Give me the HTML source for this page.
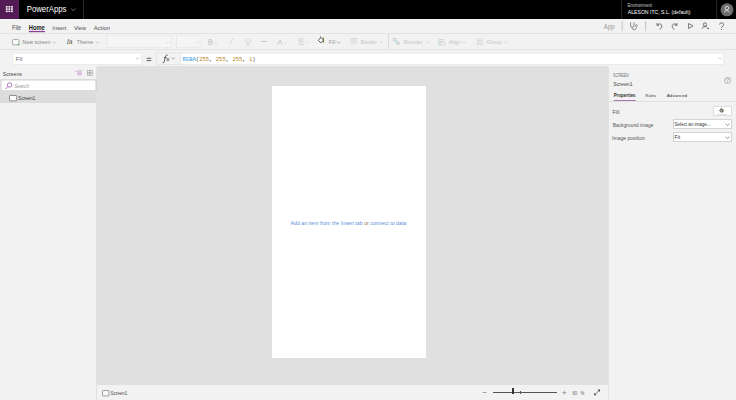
<!DOCTYPE html>
<html><head><meta charset="utf-8">
<style>
*{box-sizing:border-box;margin:0;padding:0}
html,body{width:736px;height:400px;overflow:hidden;background:#f2f2f2;font-family:"Liberation Sans",sans-serif;position:relative}
.r{position:absolute}
.s{position:absolute;overflow:visible}
.t{position:absolute;white-space:nowrap;line-height:1;transform-origin:0 0}
</style></head><body>
<div class="r" style="left:0px;top:0px;width:736px;height:19px;background:#000;"></div>
<div class="r" style="left:0px;top:0px;width:19px;height:19px;background:#521b55;"></div>
<svg class="s" style="left:0px;top:0px;" width="19" height="19" viewBox="0 0 19 19"><rect x="5.80" y="6.00" width="1.9" height="1.6" fill="#f4eef5"/><rect x="5.80" y="8.25" width="1.9" height="1.6" fill="#f4eef5"/><rect x="5.80" y="10.50" width="1.9" height="1.6" fill="#f4eef5"/><rect x="8.40" y="6.00" width="1.9" height="1.6" fill="#f4eef5"/><rect x="8.40" y="8.25" width="1.9" height="1.6" fill="#f4eef5"/><rect x="8.40" y="10.50" width="1.9" height="1.6" fill="#f4eef5"/><rect x="11.00" y="6.00" width="1.9" height="1.6" fill="#f4eef5"/><rect x="11.00" y="8.25" width="1.9" height="1.6" fill="#f4eef5"/><rect x="11.00" y="10.50" width="1.9" height="1.6" fill="#f4eef5"/></svg>
<svg class="s" style="left:70px;top:8px;" width="7" height="4" viewBox="0 0 7 4"><polyline points="1.2,0.7 3.3000000000000003,2.7 5.4,0.7" fill="none" stroke="#bbb" stroke-width="0.6"/></svg>
<div class="r" style="left:83px;top:0px;width:1px;height:19px;background:#2a2a2a;"></div>
<svg class="s" style="left:620px;top:0px;" width="3" height="19" viewBox="0 0 3 19"><rect x="1.3" y="0" width="0.8" height="19" fill="#333"/></svg>
<svg class="s" style="left:715px;top:0px;" width="3" height="19" viewBox="0 0 3 19"><rect x="1.3" y="0" width="0.8" height="19" fill="#333"/></svg>
<svg class="s" style="left:719.5px;top:2.5px;" width="14" height="14" viewBox="0 0 14 14"><circle cx="7" cy="6.8" r="6.5" fill="#6c6c6c"/><circle cx="6.9" cy="5.1" r="1.8" fill="none" stroke="#fff" stroke-width="0.75"/><path d="M4 9.4 Q6.9 5.8 9.8 9.4" fill="none" stroke="#fff" stroke-width="0.75"/></svg>
<div class="r" style="left:0px;top:19px;width:736px;height:14.5px;background:#f2f2f2;"></div>
<div class="r" style="left:0px;top:33.2px;width:736px;height:0.7px;background:#e2e2e2;"></div>
<svg class="s" style="left:28px;top:30px;" width="18" height="3" viewBox="0 0 18 3"><rect x="0.9" y="0.9" width="16" height="1.3" fill="#8b3f98"/></svg>
<svg class="s" style="left:620px;top:20px;" width="3" height="12" viewBox="0 0 3 12"><rect x="1.7" y="1.3" width="0.8" height="10" fill="#b4b4b4"/></svg>
<svg class="s" style="left:644px;top:20px;" width="3" height="12" viewBox="0 0 3 12"><rect x="1.3" y="1.3" width="0.8" height="10" fill="#b4b4b4"/></svg>
<svg class="s" style="left:629px;top:21px;" width="10" height="10" viewBox="0 0 10 10"><path d="M1.6 1.4 V4.4 Q1.6 6.6 3.3 6.6 Q5 6.6 5 4.4 V1.4" fill="none" stroke="#555" stroke-width="0.65"/><path d="M3.3 6.6 V7.4 Q3.3 8.8 4.9 8.8 Q7.4 8.8 7.4 6.6 V5.6" fill="none" stroke="#666" stroke-width="0.65"/><circle cx="7.4" cy="4.6" r="1" fill="none" stroke="#666" stroke-width="0.6"/></svg>
<svg class="s" style="left:655.5px;top:21.8px;" width="7" height="8" viewBox="0 0 7 8"><path d="M1 1 V3.3 H3.2" fill="none" stroke="#444" stroke-width="0.7"/><path d="M1.2 3.2 Q3 1 4.6 2 Q6.4 3.4 5.6 5.6 Q5 6.8 3.6 7.4" fill="none" stroke="#444" stroke-width="0.7"/></svg>
<svg class="s" style="left:670.6px;top:21.8px;" width="7" height="8" viewBox="0 0 7 8"><path d="M6 1 V3.3 H3.8" fill="none" stroke="#444" stroke-width="0.7"/><path d="M5.8 3.2 Q4 1 2.4 2 Q0.6 3.4 1.4 5.6 Q2 6.8 3.4 7.4" fill="none" stroke="#444" stroke-width="0.7"/></svg>
<svg class="s" style="left:687.5px;top:23.2px;" width="6" height="6.5" viewBox="0 0 6 6.5"><path d="M0.6 0.5 L5 3 L0.6 5.6 Z" fill="none" stroke="#444" stroke-width="0.7"/></svg>
<svg class="s" style="left:701px;top:22px;" width="9" height="8" viewBox="0 0 9 8"><circle cx="4" cy="2.5" r="1.7" fill="none" stroke="#444" stroke-width="0.7"/><path d="M1.3 6.6 Q1.8 4.5 4 4.5 Q5.6 4.5 6.4 5.7" fill="none" stroke="#444" stroke-width="0.7"/><circle cx="7.2" cy="6.5" r="0.75" fill="#444"/></svg>
<svg class="s" style="left:717.5px;top:21.5px;" width="7" height="9" viewBox="0 0 7 9"><path d="M1.6 2.6 Q1.6 0.8 3.6 0.8 Q5.6 0.8 5.6 2.6 Q5.6 3.8 4.2 4.6 Q3.6 5 3.6 6" fill="none" stroke="#444" stroke-width="0.7"/><circle cx="3.6" cy="7.6" r="0.5" fill="#444"/></svg>
<div class="r" style="left:0px;top:33.9px;width:736px;height:15.4px;background:#f2f2f2;"></div>
<div class="r" style="left:0px;top:49.3px;width:736px;height:0.7px;background:#e2e2e2;"></div>
<svg class="s" style="left:12px;top:38.5px;" width="8" height="7" viewBox="0 0 8 7"><rect x="0.6" y="0.6" width="6.4" height="5.2" rx="0.8" fill="#fff" stroke="#888" stroke-width="0.7"/><rect x="5.8" y="4.9" width="1.4" height="1.3" fill="#3aa040"/></svg>
<svg class="s" style="left:52px;top:41px;" width="5" height="3" viewBox="0 0 5 3"><polyline points="0.7,0.7 2.5,2.3 4.3,0.7" fill="none" stroke="#aaa" stroke-width="0.6"/></svg>
<svg class="s" style="left:66px;top:38px;" width="8" height="7" viewBox="0 0 8 7"><path d="M1.6 4.8 L2.6 1 L3.6 4.8" fill="none" stroke="#8a8a8a" stroke-width="0.9"/><rect x="4.4" y="2.2" width="1.8" height="2.6" fill="#8a8090"/><rect x="0.8" y="4.9" width="1.6" height="1.1" fill="#3f86d0"/><rect x="2.4" y="4.9" width="2.4" height="1.1" fill="#f0a040"/><rect x="5" y="4.9" width="1.2" height="1.1" fill="#40a070"/></svg>
<svg class="s" style="left:94.5px;top:40.8px;" width="5" height="3" viewBox="0 0 5 3"><polyline points="0.7,0.7 2.5,2.3 4.3,0.7" fill="none" stroke="#aaa" stroke-width="0.6"/></svg>
<svg class="s" style="left:106px;top:35px;" width="66" height="14" viewBox="0 0 66 14"><rect x="0.9" y="0.7" width="64" height="11.9" fill="#f5f5f5" stroke="#e6e6e6" stroke-width="0.8"/></svg>
<svg class="s" style="left:165px;top:40.5px;" width="5" height="3" viewBox="0 0 5 3"><polyline points="0.7,0.7 2.3,2.3 3.9,0.7" fill="none" stroke="#d4d4d4" stroke-width="0.6"/></svg>
<svg class="s" style="left:176px;top:35px;" width="25" height="14" viewBox="0 0 25 14"><rect x="0.6" y="0.7" width="23.4" height="11.9" fill="#f5f5f5" stroke="#e6e6e6" stroke-width="0.8"/></svg>
<svg class="s" style="left:195px;top:40.5px;" width="5" height="3" viewBox="0 0 5 3"><polyline points="0.7,0.7 2.3,2.3 3.9,0.7" fill="none" stroke="#d4d4d4" stroke-width="0.6"/></svg>
<svg class="s" style="left:208px;top:38.5px;" width="10" height="7" viewBox="0 0 10 7"><path d="M0.9 0.6 H2.9 Q4.4 0.6 4.4 1.9 Q4.4 3 2.9 3 H0.9 V0.6 M0.9 3 H3.1 Q4.7 3 4.7 4.4 Q4.7 5.6 3.1 5.6 H0.9 Z" fill="none" stroke="#c8c8c8" stroke-width="0.9"/><polyline points="6.7,3.6 8.0,5 9.3,3.6" fill="none" stroke="#c8c8c8" stroke-width="0.5"/></svg>
<svg class="s" style="left:229px;top:38px;" width="5" height="7" viewBox="0 0 5 7"><line x1="3.8" y1="0.8" x2="1" y2="6.2" stroke="#c8c8c8" stroke-width="0.7"/></svg>
<svg class="s" style="left:245px;top:38px;" width="6" height="8" viewBox="0 0 6 8"><path d="M1 0.8 V4 Q3 6.8 5 4 V0.8" fill="none" stroke="#c8c8c8" stroke-width="0.7"/><line x1="0.6" y1="7.2" x2="5.4" y2="7.2" stroke="#c8c8c8" stroke-width="0.6"/></svg>
<div class="r" style="left:261px;top:41.2px;width:6px;height:1.1px;background:#c8c8c8;"></div>
<svg class="s" style="left:277px;top:38.5px;" width="11" height="7" viewBox="0 0 11 7"><path d="M0.6 5.8 L3 0.6 L5.4 5.8 M1.6 3.8 H4.4" fill="none" stroke="#c8c8c8" stroke-width="0.8"/><polyline points="7,3.6 8.3,5 9.6,3.6" fill="none" stroke="#c8c8c8" stroke-width="0.5"/></svg>
<svg class="s" style="left:297.5px;top:38.3px;" width="11" height="7" viewBox="0 0 11 7"><line x1="0.5" y1="0.80" x2="6" y2="0.80" stroke="#d0d0d0" stroke-width="0.7"/><line x1="0.5" y1="2.25" x2="4.5" y2="2.25" stroke="#d0d0d0" stroke-width="0.7"/><line x1="0.5" y1="3.70" x2="6" y2="3.70" stroke="#d0d0d0" stroke-width="0.7"/><line x1="0.5" y1="5.15" x2="4.5" y2="5.15" stroke="#d0d0d0" stroke-width="0.7"/><line x1="0.5" y1="6.60" x2="6" y2="6.60" stroke="#d0d0d0" stroke-width="0.7"/><polyline points="7.5,3.8 8.75,5.2 10,3.8" fill="none" stroke="#c8c8c8" stroke-width="0.5"/></svg>
<svg class="s" style="left:317px;top:35px;" width="9" height="10" viewBox="0 0 9 10"><rect x="5.6" y="2.6" width="1.3" height="5" fill="#8c7424"/><path d="M1.2 5.3 L4 2.5 L6.6 5.1 L3.8 7.9 Z" fill="#fafafa" stroke="#333" stroke-width="0.8"/><path d="M3.6 3 L3.5 1.2" stroke="#777" stroke-width="0.9"/></svg>
<svg class="s" style="left:316px;top:44px;" width="11" height="3" viewBox="0 0 11 3"><rect x="1" y="0.8" width="8.6" height="1.2" fill="#ffffff"/></svg>
<svg class="s" style="left:336px;top:40.8px;" width="5" height="3" viewBox="0 0 5 3"><polyline points="0.7,0.7 2.5,2.3 4.3,0.7" fill="none" stroke="#888" stroke-width="0.6"/></svg>
<svg class="s" style="left:350.3px;top:38.2px;" width="7.5" height="7" viewBox="0 0 7.5 7"><line x1="0.5" y1="0.80" x2="7" y2="0.80" stroke="#c8c8c8" stroke-width="0.9"/><line x1="0.5" y1="2.30" x2="7" y2="2.30" stroke="#c8c8c8" stroke-width="0.5"/><line x1="0.5" y1="3.80" x2="7" y2="3.80" stroke="#c8c8c8" stroke-width="0.5"/><line x1="0.5" y1="5.30" x2="7" y2="5.30" stroke="#c8c8c8" stroke-width="0.5"/></svg>
<svg class="s" style="left:378.5px;top:40.8px;" width="5" height="3" viewBox="0 0 5 3"><polyline points="0.7,0.7 2.3,2.3 3.9,0.7" fill="none" stroke="#c8c8c8" stroke-width="0.6"/></svg>
<div class="r" style="left:388.3px;top:33.9px;width:0.7px;height:15.4px;background:#dcdcdc;"></div>
<svg class="s" style="left:392px;top:37px;" width="9" height="9" viewBox="0 0 9 9"><rect x="1.3" y="1.4" width="2.6" height="2.4" fill="none" stroke="#c4c4c4" stroke-width="0.7"/><circle cx="4.5" cy="4.5" r="1.9" fill="#cde8ea"/><rect x="4.9" y="5.2" width="2.6" height="2.3" fill="none" stroke="#c4c4c4" stroke-width="0.7"/></svg>
<svg class="s" style="left:425px;top:40.8px;" width="5" height="3" viewBox="0 0 5 3"><polyline points="0.7,0.7 2.3,2.3 3.9,0.7" fill="none" stroke="#c8c8c8" stroke-width="0.6"/></svg>
<svg class="s" style="left:437.6px;top:38px;" width="8" height="8" viewBox="0 0 8 8"><line x1="0.8" y1="0.5" x2="0.8" y2="7.5" stroke="#b8d8d8" stroke-width="0.8"/><rect x="2" y="1.6" width="3.5" height="2.2" fill="none" stroke="#c8c8c8" stroke-width="0.6"/><rect x="2" y="4.8" width="5.2" height="2.2" fill="none" stroke="#c8c8c8" stroke-width="0.6"/></svg>
<svg class="s" style="left:462.3px;top:40.8px;" width="5" height="3" viewBox="0 0 5 3"><polyline points="0.7,0.7 2.3,2.3 3.9,0.7" fill="none" stroke="#c8c8c8" stroke-width="0.6"/></svg>
<svg class="s" style="left:475.6px;top:38px;" width="8" height="8" viewBox="0 0 8 8"><rect x="1" y="1" width="6" height="6" fill="none" stroke="#c8c8c8" stroke-width="0.6" stroke-dasharray="1 0.8"/><rect x="2.6" y="2.6" width="2.8" height="2.8" fill="none" stroke="#c8c8c8" stroke-width="0.6"/></svg>
<svg class="s" style="left:503.5px;top:40.8px;" width="5" height="3" viewBox="0 0 5 3"><polyline points="0.7,0.7 2.3,2.3 3.9,0.7" fill="none" stroke="#c8c8c8" stroke-width="0.6"/></svg>
<div class="r" style="left:0px;top:50px;width:736px;height:16.5px;background:#f2f2f2;"></div>
<svg class="s" style="left:12px;top:52px;" width="131" height="14" viewBox="0 0 131 14"><rect x="0.8" y="1" width="129" height="11.6" fill="#fff" stroke="#e6e6e6" stroke-width="0.8"/></svg>
<svg class="s" style="left:135px;top:56.5px;" width="5" height="3" viewBox="0 0 5 3"><polyline points="0.7,0.7 2.5,2.3 4.3,0.7" fill="none" stroke="#aaa" stroke-width="0.6"/></svg>
<svg class="s" style="left:146px;top:57px;" width="6" height="5" viewBox="0 0 6 5"><rect x="0.6" y="0.8" width="4.6" height="0.9" fill="#4a4a4a"/><rect x="0.6" y="3.2" width="4.6" height="0.9" fill="#4a4a4a"/></svg>
<svg class="s" style="left:156px;top:52px;" width="25" height="14" viewBox="0 0 25 14"><rect x="0.6" y="1" width="24" height="11.6" fill="#f3f3f3" stroke="#e2e2e2" stroke-width="0.8"/></svg>
<svg class="s" style="left:160px;top:54px;" width="12" height="10" viewBox="0 0 12 10"><path d="M7.6 1.3 Q6.4 0.7 5.7 1.8 Q5.3 2.6 5 4.5 Q4.5 7.6 3.9 8.4 Q3.4 9 2.6 8.6" fill="none" stroke="#2a2a2a" stroke-width="0.75"/><path d="M3.9 3.7 H6.6" stroke="#2a2a2a" stroke-width="0.6"/><path d="M6.7 4.3 Q7.3 4.1 7.9 5.3 Q8.5 6.8 9.3 6.9 M9.5 4.2 Q8.5 4.4 7.7 6 Q7.2 7 6.6 6.9" fill="none" stroke="#2a2a2a" stroke-width="0.6"/></svg>
<svg class="s" style="left:171px;top:56.8px;" width="5" height="3" viewBox="0 0 5 3"><polyline points="0.5,0.5 2.2,2 3.9,0.5" fill="none" stroke="#666" stroke-width="0.6"/></svg>
<svg class="s" style="left:180px;top:52px;" width="545" height="14" viewBox="0 0 545 14"><rect x="0.7" y="1" width="543" height="11.6" fill="#fff" stroke="#e6e6e6" stroke-width="0.8"/></svg>
<svg class="s" style="left:718px;top:56.8px;" width="5" height="3" viewBox="0 0 5 3"><polyline points="0.5,0.5 2.2,2.2 3.9,0.5" fill="none" stroke="#bbb" stroke-width="0.6"/></svg>
<div class="r" style="left:0px;top:66.5px;width:96px;height:333.5px;background:#f2f2f2;"></div>
<div class="r" style="left:96px;top:66.5px;width:0.8px;height:333.5px;background:#e2e2e2;"></div>
<svg class="s" style="left:74px;top:69px;" width="9" height="8" viewBox="0 0 9 8"><rect x="1.1" y="1.9" width="1.3" height="1" fill="#c79fcc"/><g stroke="#cfa8d2" stroke-width="0.9"><line x1="3.4" y1="1.9" x2="7.8" y2="1.9"/><line x1="3.4" y1="3.2" x2="7.8" y2="3.2"/><line x1="3.4" y1="4.5" x2="7.8" y2="4.5"/><line x1="3.4" y1="5.8" x2="7.8" y2="5.8"/></g></svg>
<svg class="s" style="left:86px;top:69px;" width="8" height="8" viewBox="0 0 8 8"><g fill="none" stroke="#a8a8a8" stroke-width="0.65"><rect x="1.3" y="1.4" width="2.6" height="2.6"/><rect x="3.9" y="1.4" width="2.6" height="2.6"/><rect x="1.3" y="4" width="2.6" height="2.6"/><rect x="3.9" y="4" width="2.6" height="2.6"/></g></svg>
<svg class="s" style="left:0px;top:79px;" width="97" height="13" viewBox="0 0 97 13"><rect x="1" y="0.9" width="95" height="11" fill="#fff" stroke="#c9c9c9" stroke-width="1"/></svg>
<svg class="s" style="left:4.8px;top:82px;" width="8" height="8" viewBox="0 0 8 8"><circle cx="4.6" cy="3" r="2.2" fill="none" stroke="#a050b0" stroke-width="0.8"/><line x1="3" y1="4.6" x2="0.6" y2="7" stroke="#a050b0" stroke-width="0.9"/></svg>
<div class="r" style="left:0px;top:91.1px;width:96px;height:12.4px;background:#dcdcdc;"></div>
<svg class="s" style="left:8.8px;top:95px;" width="8.5" height="6.6" viewBox="0 0 8.5 6.6"><rect x="0.5" y="0.5" width="7.2" height="5.4" rx="0.6" fill="#fafafa" stroke="#666" stroke-width="0.7"/></svg>
<div class="r" style="left:96.8px;top:66.2px;width:511.2px;height:318.6px;background:#e0e0e0;"></div>
<div class="r" style="left:271.5px;top:86.2px;width:154px;height:271.8px;background:#fff;"></div>
<div class="r" style="left:96.8px;top:384.8px;width:511.2px;height:15.2px;background:#f2f2f2;"></div>
<svg class="s" style="left:102px;top:389.6px;" width="7.5" height="6.6" viewBox="0 0 7.5 6.6"><rect x="0.5" y="0.5" width="6.4" height="5.4" rx="0.6" fill="#fafafa" stroke="#777" stroke-width="0.7"/></svg>
<svg class="s" style="left:481px;top:391px;" width="7" height="3" viewBox="0 0 7 3"><rect x="1.6" y="1.1" width="4" height="0.7" fill="#888"/></svg>
<div class="r" style="left:492.7px;top:392.0px;width:64.2px;height:0.8px;background:#555;"></div>
<div class="r" style="left:512.1px;top:388.0px;width:1.9px;height:5.8px;background:#333;"></div>
<div class="r" style="left:520.2px;top:390.6px;width:0.6px;height:3.4px;background:#555;"></div>
<svg class="s" style="left:562px;top:390px;" width="5" height="5" viewBox="0 0 5 5"><path d="M2.4 0.6 V4.6 M0.4 2.6 H4.4" stroke="#777" stroke-width="0.6"/></svg>
<svg class="s" style="left:593px;top:389px;" width="8" height="8" viewBox="0 0 8 8"><line x1="1.4" y1="6" x2="6.6" y2="0.8" stroke="#444" stroke-width="0.7"/><path d="M6.9 0.5 L6.9 2.9 L4.5 0.5 Z M1.1 6.3 L1.1 3.9 L3.5 6.3 Z" fill="#444"/></svg>
<div class="r" style="left:608px;top:66.5px;width:0.8px;height:333.5px;background:#e2e2e2;"></div>
<div class="r" style="left:608.8px;top:66.5px;width:127.2px;height:333.5px;background:#f2f2f2;"></div>
<svg class="s" style="left:723.8px;top:76.6px;" width="8" height="8" viewBox="0 0 8 8"><circle cx="3.6" cy="3.4" r="3" fill="none" stroke="#888" stroke-width="0.6"/><path d="M2.6 2.6 Q2.6 1.6 3.6 1.6 Q4.6 1.6 4.6 2.5 Q4.6 3.2 3.6 3.6 V4.2" fill="none" stroke="#777" stroke-width="0.5"/><circle cx="3.6" cy="5.1" r="0.35" fill="#777"/></svg>
<svg class="s" style="left:613px;top:99.5px;" width="24" height="3" viewBox="0 0 24 3"><rect x="0.9" y="0.3" width="21.8" height="1.5" fill="#8b3f98"/></svg>
<div class="r" style="left:608.8px;top:101.1px;width:127.2px;height:0.7px;background:#e0e0e0;"></div>
<div class="r" style="left:713.3px;top:106.4px;width:18.3px;height:9.7px;background:#ffffff;border:0.7px solid #dedede"></div>
<svg class="s" style="left:718px;top:107px;" width="8" height="7" viewBox="0 0 8 7"><rect x="4.3" y="1.8" width="1" height="3.6" fill="#8c7424"/><path d="M1.5 3.6 L3.4 1.7 L5.3 3.6 L3.4 5.5 Z" fill="#9a9a9a" stroke="#444" stroke-width="0.7"/><path d="M3.3 2 L3.2 0.8" stroke="#777" stroke-width="0.7"/></svg>
<div class="r" style="left:717px;top:114.2px;width:10px;height:0.6px;background:#e4e4e4;"></div>
<div class="r" style="left:673px;top:119.4px;width:58.6px;height:9.3px;background:#ffffff;border:0.7px solid #d4d4d4"></div>
<svg class="s" style="left:724.5px;top:122.5px;" width="5" height="3" viewBox="0 0 5 3"><polyline points="0.5,0.6 2.5,2.6 4.5,0.6" fill="none" stroke="#555" stroke-width="0.6"/></svg>
<div class="r" style="left:673px;top:132.3px;width:58.6px;height:9.3px;background:#ffffff;border:0.7px solid #d4d4d4"></div>
<svg class="s" style="left:724.5px;top:135.5px;" width="5" height="3" viewBox="0 0 5 3"><polyline points="0.5,0.6 2.5,2.6 4.5,0.6" fill="none" stroke="#555" stroke-width="0.6"/></svg>
<div class="t" style="left:26px;top:6.31px;font-size:8.26px;color:#fff;font-weight:normal;font-family:'Liberation Sans';transform:translateX(0.76px) scaleX(0.939)">PowerApps</div>
<div class="t" style="left:627px;top:3.61px;font-size:4.83px;color:#c8c8c8;font-weight:normal;font-family:'Liberation Sans';transform:translateX(0.40px) scaleX(0.911)">Environment</div>
<div class="t" style="left:627px;top:9.66px;font-size:5.24px;color:#fff;font-weight:normal;font-family:'Liberation Sans';transform:translateX(0.81px) scaleX(0.977)">ALESON ITC, S.L. (default)</div>
<div class="t" style="left:12px;top:25.13px;font-size:6.34px;color:#505050;font-weight:normal;font-family:'Liberation Sans';transform:translateX(0.03px) scaleX(0.899)">File</div>
<div class="t" style="left:28px;top:24.86px;font-size:6.67px;color:#222;font-weight:bold;font-family:'Liberation Sans';transform:translateX(0.76px) scaleX(0.868)">Home</div>
<div class="t" style="left:52px;top:25.22px;font-size:6.23px;color:#505050;font-weight:normal;font-family:'Liberation Sans';transform:translateX(0.34px) scaleX(0.901)">Insert</div>
<div class="t" style="left:73px;top:25.83px;font-size:5.52px;color:#505050;font-weight:normal;font-family:'Liberation Sans';transform:translateX(0.97px) scaleX(1.014)">View</div>
<div class="t" style="left:93px;top:26.48px;font-size:5.93px;color:#505050;font-weight:normal;font-family:'Liberation Sans';transform:translateX(0.65px) scaleX(0.998)">Action</div>
<div class="t" style="left:603px;top:23.27px;font-size:7.25px;color:#999;font-weight:normal;font-family:'Liberation Sans';transform:translateX(0.83px) scaleX(0.841)">App</div>
<div class="t" style="left:22px;top:40.14px;font-size:5.51px;color:#858585;font-weight:normal;font-family:'Liberation Sans';transform:translateX(0.61px) scaleX(0.957)">New screen</div>
<div class="t" style="left:76px;top:40.26px;font-size:5.24px;color:#858585;font-weight:normal;font-family:'Liberation Sans';transform:translateX(0.87px) scaleX(1.007)">Theme</div>
<div class="t" style="left:328px;top:40.25px;font-size:5.38px;color:#9a9a9a;font-weight:normal;font-family:'Liberation Sans';transform:translateX(0.71px) scaleX(0.971)">Fill</div>
<div class="t" style="left:360px;top:40.25px;font-size:5.38px;color:#c4c4c4;font-weight:normal;font-family:'Liberation Sans';transform:translateX(0.79px) scaleX(1.003)">Border</div>
<div class="t" style="left:403px;top:40.25px;font-size:5.38px;color:#c4c4c4;font-weight:normal;font-family:'Liberation Sans';transform:translateX(0.79px) scaleX(0.977)">Reorder</div>
<div class="t" style="left:448px;top:40.25px;font-size:5.38px;color:#c4c4c4;font-weight:normal;font-family:'Liberation Sans';transform:translateX(0.63px) scaleX(1.030)">Align</div>
<div class="t" style="left:486px;top:40.08px;font-size:5.57px;color:#c4c4c4;font-weight:normal;font-family:'Liberation Sans';transform:translateX(0.55px) scaleX(0.974)">Group</div>
<div class="t" style="left:15px;top:55.56px;font-size:6.07px;color:#777;font-weight:normal;font-family:'Liberation Sans';transform:translateX(0.43px) scaleX(1.086)">Fil</div>
<div class="t" style="left:182px;top:56.95px;font-size:6.07px;color:#444;font-weight:normal;font-family:'Liberation Mono';transform:translateX(0.53px) scaleX(0.913)"><span style="color:#2f95d6">RGBA</span>(<span style="color:#b98620">255</span>, <span style="color:#b98620">255</span>, <span style="color:#b98620">255</span>, <span style="color:#b98620">1</span>)</div>
<div class="t" style="left:2px;top:70.62px;font-size:6.00px;color:#444;font-weight:normal;font-family:'Liberation Sans';transform:translateX(0.71px) scaleX(0.873)">Screens</div>
<div class="t" style="left:14px;top:84.36px;font-size:5.24px;color:#999;font-weight:normal;font-family:'Liberation Sans';transform:translateX(0.47px) scaleX(0.873)">Search</div>
<div class="t" style="left:18px;top:96.16px;font-size:5.71px;color:#333;font-weight:normal;font-family:'Liberation Sans';transform:translateX(0.36px) scaleX(0.794)">Screen1</div>
<div class="t" style="left:612px;top:73.63px;font-size:4.57px;color:#707070;font-weight:normal;font-family:'Liberation Sans';transform:translateX(0.98px) scaleX(0.823)">SCREEN</div>
<div class="t" style="left:613px;top:82.16px;font-size:5.71px;color:#444;font-weight:normal;font-family:'Liberation Sans';transform:translateX(0.22px) scaleX(0.910)">Screen1</div>
<div class="t" style="left:613px;top:93.93px;font-size:4.69px;color:#333;font-weight:bold;font-family:'Liberation Sans';transform:translateX(0.71px) scaleX(0.943)">Properties</div>
<div class="t" style="left:645px;top:94.18px;font-size:4.28px;color:#383838;font-weight:normal;font-family:'Liberation Sans';transform:translateX(0.51px) scaleX(0.958)">Rules</div>
<div class="t" style="left:666px;top:94.18px;font-size:4.28px;color:#383838;font-weight:normal;font-family:'Liberation Sans';transform:translateX(0.82px) scaleX(1.067)">Advanced</div>
<div class="t" style="left:612px;top:110.36px;font-size:5.24px;color:#555;font-weight:normal;font-family:'Liberation Sans';transform:translateX(0.57px) scaleX(1.013)">Fill</div>
<div class="t" style="left:612px;top:123.23px;font-size:5.52px;color:#555;font-weight:normal;font-family:'Liberation Sans';transform:translateX(0.87px) scaleX(0.880)">Background image</div>
<div class="t" style="left:612px;top:136.03px;font-size:5.52px;color:#555;font-weight:normal;font-family:'Liberation Sans';transform:translateX(0.10px) scaleX(0.910)">Image position</div>
<div class="t" style="left:674px;top:121.76px;font-size:5.24px;color:#333;font-weight:normal;font-family:'Liberation Sans';transform:translateX(0.40px) scaleX(0.863)">Select an image...</div>
<div class="t" style="left:674px;top:134.55px;font-size:5.38px;color:#333;font-weight:normal;font-family:'Liberation Sans';transform:translateX(0.61px) scaleX(0.925)">Fit</div>
<div class="t" style="left:290px;top:221.05px;font-size:5.38px;color:#5a90da;font-weight:normal;font-family:'Liberation Sans';transform:translateX(0.44px) scaleX(0.979)">Add an item from the Insert tab <span style="color:#8a7c66">or</span> connect to data</div>
<div class="t" style="left:110px;top:391.16px;font-size:5.71px;color:#444;font-weight:normal;font-family:'Liberation Sans';transform:translateX(0.60px) scaleX(0.785)">Screen1</div>
<div class="t" style="left:572px;top:391.30px;font-size:5.43px;color:#666;font-weight:normal;font-family:'Liberation Sans';transform:translateX(0.54px) scaleX(0.773)">60</div>
<div class="t" style="left:580px;top:391.27px;font-size:5.47px;color:#666;font-weight:normal;font-family:'Liberation Sans';transform:translateX(0.52px) scaleX(0.781)">%</div>
</body></html>
